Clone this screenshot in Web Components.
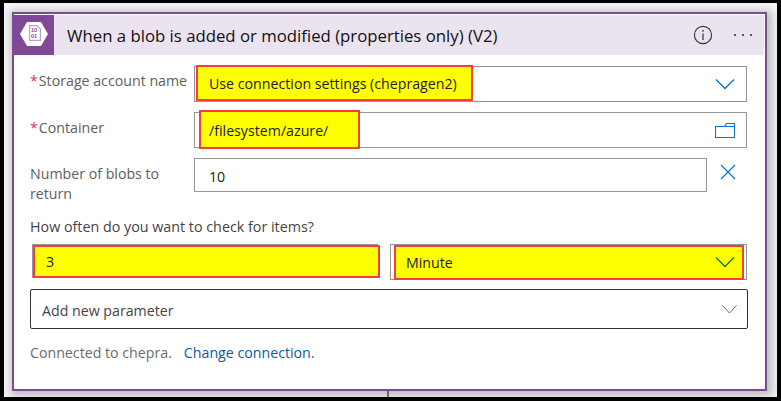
<!DOCTYPE html>
<html>
<head>
<meta charset="utf-8">
<style>
    html, body { margin: 0; height: 100%; background: #000; overflow: hidden; }
    body { font-family: "Open Sans", "Liberation Sans", sans-serif; }
</style>
</head>
<body>
<flow-frame>
    <flow-card>
        <trigger-header slot="header" title-text="When a blob is added or modified (properties only) (V2)"></trigger-header>

        <form-row label="Storage account name" required>
            <flow-input kind="chevron" mark="2,-1,277,36" style="--h:36px;--mr:18px">Use connection settings (chepragen2)</flow-input>
        </form-row>
        <form-row label="Container" required style="--top:10px;--lt:6px">
            <flow-input kind="folder" mark="5,-2,161,39" style="--h:36px;--mr:18px;--ty:2px">/filesystem/azure/</flow-input>
        </form-row>
        <form-row label="Number of blobs to return" style="--top:10px;--lt:6px">
            <flow-input style="--h:34px;--ty:3px">10</flow-input>
            <span class="x" slot="after"><svg width="16" height="16" viewBox="0 0 16 16"><path d="M1 1 15 15M15 1 1 15" stroke="#0078d4" stroke-width="1.2" fill="none"/></svg></span>
        </form-row>

        <freq-block label="How often do you want to check for items?">
            <flow-input mark="1,1,347,33" style="--h:34px;--w:346px;--pad:13px">3</flow-input>
            <flow-input kind="chevron-green" mark="4,1,350,35" style="--h:36px;--w:357px;--pad:15px">Minute</flow-input>
        </freq-block>

        <param-select>Add new parameter</param-select>
        <connection-note who="chepra"></connection-note>
    </flow-card>
</flow-frame>

<script>
/**
 * Outer black screenshot edge, and the grey area round the card.
 */
class FlowFrame extends HTMLElement {
    constructor() {
        super();
        this.attachShadow({mode: "open"});
        this.shadowRoot.innerHTML = `
            <style>
                :host {
                    display: block;
                    box-sizing: border-box;
                    width: 773px;
                    height: 394px;
                    margin: 3px 0 0 4px;
                    padding: 9px 0 0 8px;
                    background: #f4f4f4;
                }
            </style>
            <slot></slot>
        `;
    }
}

class FlowCard extends HTMLElement {
    constructor() {
        super();
        this.attachShadow({mode: "open"});
        this.shadowRoot.innerHTML = `
            <style>
                :host {
                    display: block;
                    position: relative;
                    box-sizing: border-box;
                    width: 755px;
                    height: 379px;
                    background: #fff;
                    border: 2px solid #804998;
                    box-shadow: 2px 2px 8px 3px rgba(0,0,0,.22);
                }
                .body {
                    padding: 11px 0 0 16px;
                }
                .stem {
                    position: absolute;
                    left: 373px;
                    top: 377px;
                    width: 2px;
                    height: 6px;
                    background: #6b6b6b;
                }
            </style>
            <slot name="header"></slot>
            <div class="body"><slot></slot></div>
            <div class="stem"></div>
        `;
    }
}

class TriggerHeader extends HTMLElement {
    constructor() {
        super();
        this.attachShadow({mode: "open"});
        this.shadowRoot.innerHTML = `
            <style>
                :host {
                    display: flex;
                    align-items: center;
                    height: 40px;
                    margin: 1px 1px 0 0;
                    background: #ebe3f0;
                    color: #111;
                }
                .logo {
                    display: flex;
                    align-items: center;
                    justify-content: center;
                    width: 40px;
                    height: 40px;
                    background: #804998;
                    flex: none;
                }
                .logo svg { margin-bottom: 2px; }
                .logo text { font-family: "Liberation Sans", sans-serif; font-size: 5.5px; font-weight: bold; fill: #804998; }
                .title {
                    flex: 1;
                    margin-left: 13px;
                    font-size: 16.75px;
                    white-space: nowrap;
                }
                .info { margin-right: 20px; display: flex; }
                .more { margin-right: 11px; display: flex; }
            </style>
            <div class="logo">
                <svg width="30" height="26" viewBox="0 0 30 26">
                    <path d="M8 1H22L29 13 22 25H8L1 13Z" fill="#fff"/>
                    <path d="M10.6 4.6H18L21.4 8V19.4H10.6Z" fill="#fff" stroke="#b7a0c6" stroke-width="1.2"/>
                    <text x="12" y="11">10</text>
                    <text x="12" y="17">01</text>
                </svg>
            </div>
            <div class="title"></div>
            <span class="info">
                <svg width="20" height="20" viewBox="0 0 20 20">
                    <circle cx="10" cy="10" r="8.6" fill="none" stroke="#333" stroke-width="1.1"/>
                    <path d="M10 8.5V15" stroke="#333" stroke-width="1.2"/>
                    <circle cx="10" cy="5.8" r=".9" fill="#333"/>
                </svg>
            </span>
            <span class="more">
                <svg width="20" height="4" viewBox="0 0 20 4">
                    <circle cx="2" cy="2" r="1.1" fill="#333"/>
                    <circle cx="10" cy="2" r="1.1" fill="#333"/>
                    <circle cx="18" cy="2" r="1.1" fill="#333"/>
                </svg>
            </span>
        `;
        this.shadowRoot.querySelector(".title").textContent = this.getAttribute("title-text");
    }
}

class FormRow extends HTMLElement {
    constructor() {
        super();
        this.attachShadow({mode: "open"});
        this.shadowRoot.innerHTML = `
            <style>
                :host {
                    display: flex;
                    align-items: flex-start;
                    margin-top: var(--top, 0);
                    color: #605e5c;
                    font-size: 14.2px;
                    line-height: 20px;
                }
                .label {
                    width: 164px;
                    flex: none;
                    box-sizing: border-box;
                    padding-top: var(--lt, 5px);
                }
                .label.req-label { white-space: nowrap; }
                .label.plain { padding-right: 8px; line-height: 19.5px; }
                .req { color: #e0364f; margin-right: 1px; }
                .field { flex: 1; min-width: 0; }
                .after { flex: none; display: flex; justify-content: center; align-items: center; height: 28px; }
                ::slotted(.x) { display: flex; margin: 0 29px 0 13px; }
            </style>
            <div class="label"></div>
            <div class="field"><slot></slot></div>
            <div class="after"><slot name="after"></slot></div>
        `;
        const label = this.shadowRoot.querySelector(".label");
        if(this.hasAttribute("required")) {
            label.classList.add("req-label");
            const star = document.createElement("span");
            star.className = "req";
            star.textContent = "*";
            label.appendChild(star);
        } else {
            label.classList.add("plain");
        }
        label.appendChild(document.createTextNode(this.getAttribute("label")));
    }
}

// a bordered field; "mark" is the yellow and red annotation drawn over it: x,y,w,h
class FlowInput extends HTMLElement {
    constructor() {
        super();
        this.attachShadow({mode: "open"});
        this.shadowRoot.innerHTML = `
            <style>
                :host {
                    display: flex;
                    align-items: center;
                    position: relative;
                    box-sizing: border-box;
                    height: var(--h, 36px);
                    width: var(--w, auto);
                    margin-right: var(--mr, 0);
                    border: 1px solid #969696;
                    padding-left: var(--pad, 14px);
                    color: #222;
                    font-size: 14.2px;
                    background: #fff;
                }
                .mark {
                    position: absolute;
                    box-sizing: border-box;
                    border: 2px solid #f63c3c;
                    background: #ffff00;
                }
                .text { position: relative; flex: 1; white-space: nowrap; padding-top: var(--ty, 0); }
                .icon { position: relative; display: flex; margin-right: 11px; }
            </style>
            <div class="mark" hidden></div>
            <span class="text"><slot></slot></span>
            <span class="icon"></span>
        `;
        const mark = this.getAttribute("mark");
        if(mark) {
            const [x, y, w, h] = mark.split(",");
            const el = this.shadowRoot.querySelector(".mark");
            el.hidden = false;
            el.style.cssText = `left:${x - 1}px;top:${y - 1}px;width:${w}px;height:${h}px`;
        }
        const icons = {
            "chevron": `<svg width="20" height="12" viewBox="0 0 20 12"><path d="M1 1.5 10 10.5 19 1.5" fill="none" stroke="#0078d4" stroke-width="1.4"/></svg>`,
            "chevron-green": `<svg width="20" height="12" viewBox="0 0 20 12"><path d="M1 1.5 10 10.5 19 1.5" fill="none" stroke="#0a7a1c" stroke-width="1.4"/></svg>`,
            "folder": `<svg width="20" height="15" viewBox="0 0 20 15"><path d="M.5 3.5H9.5L11.5 .5H19.5V14.5H.5ZM9.5 3.5H19.5" fill="#fff" stroke="#0078d4" stroke-width="1.1"/></svg>`
        };
        this.shadowRoot.querySelector(".icon").innerHTML = icons[this.getAttribute("kind")] || "";
    }
}

class FreqBlock extends HTMLElement {
    constructor() {
        super();
        this.attachShadow({mode: "open"});
        this.shadowRoot.innerHTML = `
            <style>
                :host {
                    display: block;
                    margin-top: 14px;
                    color: #444;
                    font-size: 14.3px;
                }
                .label { line-height: 20px; }
                .row { display: flex; gap: 12px; align-items: flex-start; margin: 7px 0 0 2px; }
            </style>
            <div class="label"></div>
            <div class="row"><slot></slot></div>
        `;
        this.shadowRoot.querySelector(".label").textContent = this.getAttribute("label");
    }
}

class ParamSelect extends HTMLElement {
    constructor() {
        super();
        this.attachShadow({mode: "open"});
        this.shadowRoot.innerHTML = `
            <style>
                :host {
                    display: flex;
                    align-items: center;
                    justify-content: space-between;
                    box-sizing: border-box;
                    width: 718px;
                    height: 40px;
                    margin-top: 9px;
                    padding: 0 10px 0 11px;
                    border: 1px solid #333;
                    border-radius: 2px;
                    color: #444;
                    font-size: 14.2px;
                }
                .label { padding-top: 2px; }
            </style>
            <span class="label"><slot></slot></span>
            <svg width="15" height="9" viewBox="0 0 15 9"><path d="M.5 .5 7.5 8 14.5 .5" fill="none" stroke="#666" stroke-width="1"/></svg>
        `;
    }
}

class ConnectionNote extends HTMLElement {
    constructor() {
        super();
        this.attachShadow({mode: "open"});
        this.shadowRoot.innerHTML = `
            <style>
                :host {
                    display: flex;
                    gap: 12px;
                    margin-top: 14px;
                    font-size: 14.2px;
                    line-height: 20px;
                    color: #6b6b6b;
                }
                a { color: #0b5a9e; text-decoration: none; }
            </style>
            <span>Connected to ${this.getAttribute("who")}.</span>
            <a href="#">Change connection.</a>
        `;
    }
}

customElements.define("flow-frame", FlowFrame);
customElements.define("flow-card", FlowCard);
customElements.define("trigger-header", TriggerHeader);
customElements.define("form-row", FormRow);
customElements.define("flow-input", FlowInput);
customElements.define("freq-block", FreqBlock);
customElements.define("param-select", ParamSelect);
customElements.define("connection-note", ConnectionNote);
</script>
</body>
</html>
